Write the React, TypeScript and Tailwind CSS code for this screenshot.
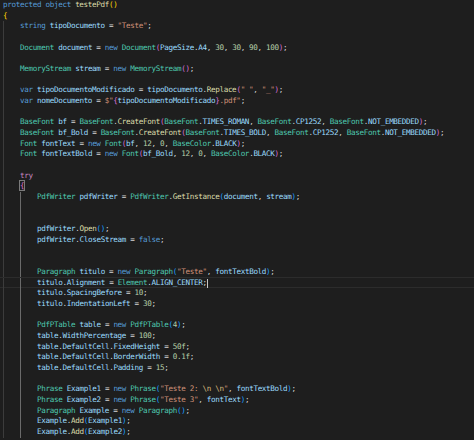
type Kind = 'k' | 't' | 'f' | 'v' | 's' | 'e' | 'n' | 'p' | 'c' | 'b1' | 'b2' | 'b3';
type Tok = [string, Kind];

interface Line {
  indent: number;
  toks: Tok[];
  box?: boolean;
  current?: boolean;
}

const color: Record<Kind, string> = {
  k: 'text-[#569cd6]',
  t: 'text-[#4ec9b0]',
  f: 'text-[#dcdcaa]',
  v: 'text-[#9cdcfe]',
  s: 'text-[#ce9178]',
  e: 'text-[#d7ba7d]',
  n: 'text-[#b5cea8]',
  p: 'text-[#d4d4d4]',
  c: 'text-[#c586c0]',
  b1: 'text-[#ffd700]',
  b2: 'text-[#da70d6]',
  b3: 'text-[#179fff]',
};

const blank = (indent: number): Line => ({ indent, toks: [] });

const lines: Line[] = [
  { indent: 0, toks: [['protected object ', 'k'], ['testePdf', 'f'], ['()', 'b1']] },
  { indent: 0, toks: [['{', 'b1']] },
  { indent: 1, toks: [['string ', 'k'], ['tipoDocumento', 'v'], [' = ', 'p'], ['"Teste"', 's'], [';', 'p']] },
  blank(1),
  {
    indent: 1,
    toks: [
      ['Document ', 't'], ['document', 'v'], [' = ', 'p'], ['new ', 'k'], ['Document', 't'], ['(', 'b2'],
      ['PageSize', 'v'], ['.', 'p'], ['A4', 'v'], [', ', 'p'], ['30', 'n'], [', ', 'p'], ['30', 'n'], [', ', 'p'],
      ['90', 'n'], [', ', 'p'], ['100', 'n'], [')', 'b2'], [';', 'p'],
    ],
  },
  blank(1),
  {
    indent: 1,
    toks: [['MemoryStream ', 't'], ['stream', 'v'], [' = ', 'p'], ['new ', 'k'], ['MemoryStream', 't'], ['()', 'b2'], [';', 'p']],
  },
  blank(1),
  {
    indent: 1,
    toks: [
      ['var ', 'k'], ['tipoDocumentoModificado', 'v'], [' = ', 'p'], ['tipoDocumento', 'v'], ['.', 'p'], ['Replace', 'f'],
      ['(', 'b2'], ['" "', 's'], [', ', 'p'], ['"_"', 's'], [')', 'b2'], [';', 'p'],
    ],
  },
  {
    indent: 1,
    toks: [
      ['var ', 'k'], ['nomeDocumento', 'v'], [' = ', 'p'], ['$"', 's'], ['{', 'b2'], ['tipoDocumentoModificado', 'v'],
      ['}', 'b2'], ['.pdf"', 's'], [';', 'p'],
    ],
  },
  blank(1),
  {
    indent: 1,
    toks: [
      ['BaseFont ', 't'], ['bf', 'v'], [' = ', 'p'], ['BaseFont', 't'], ['.', 'p'], ['CreateFont', 'f'], ['(', 'b2'],
      ['BaseFont', 't'], ['.', 'p'], ['TIMES_ROMAN', 'v'], [', ', 'p'], ['BaseFont', 't'], ['.', 'p'], ['CP1252', 'v'],
      [', ', 'p'], ['BaseFont', 't'], ['.', 'p'], ['NOT_EMBEDDED', 'v'], [')', 'b2'], [';', 'p'],
    ],
  },
  {
    indent: 1,
    toks: [
      ['BaseFont ', 't'], ['bf_Bold', 'v'], [' = ', 'p'], ['BaseFont', 't'], ['.', 'p'], ['CreateFont', 'f'], ['(', 'b2'],
      ['BaseFont', 't'], ['.', 'p'], ['TIMES_BOLD', 'v'], [', ', 'p'], ['BaseFont', 't'], ['.', 'p'], ['CP1252', 'v'],
      [', ', 'p'], ['BaseFont', 't'], ['.', 'p'], ['NOT_EMBEDDED', 'v'], [')', 'b2'], [';', 'p'],
    ],
  },
  {
    indent: 1,
    toks: [
      ['Font ', 't'], ['fontText', 'v'], [' = ', 'p'], ['new ', 'k'], ['Font', 't'], ['(', 'b2'], ['bf', 'v'], [', ', 'p'],
      ['12', 'n'], [', ', 'p'], ['0', 'n'], [', ', 'p'], ['BaseColor', 't'], ['.', 'p'], ['BLACK', 'v'], [')', 'b2'], [';', 'p'],
    ],
  },
  {
    indent: 1,
    toks: [
      ['Font ', 't'], ['fontTextBold', 'v'], [' = ', 'p'], ['new ', 'k'], ['Font', 't'], ['(', 'b2'], ['bf_Bold', 'v'],
      [', ', 'p'], ['12', 'n'], [', ', 'p'], ['0', 'n'], [', ', 'p'], ['BaseColor', 't'], ['.', 'p'], ['BLACK', 'v'],
      [')', 'b2'], [';', 'p'],
    ],
  },
  blank(1),
  { indent: 1, toks: [['try', 'c']] },
  { indent: 1, toks: [['{', 'b2']], box: true },
  {
    indent: 2,
    toks: [
      ['PdfWriter ', 't'], ['pdfWriter', 'v'], [' = ', 'p'], ['PdfWriter', 't'], ['.', 'p'], ['GetInstance', 'f'],
      ['(', 'b3'], ['document', 'v'], [', ', 'p'], ['stream', 'v'], [')', 'b3'], [';', 'p'],
    ],
  },
  blank(2),
  blank(2),
  { indent: 2, toks: [['pdfWriter', 'v'], ['.', 'p'], ['Open', 'f'], ['()', 'b3'], [';', 'p']] },
  { indent: 2, toks: [['pdfWriter', 'v'], ['.', 'p'], ['CloseStream', 'v'], [' = ', 'p'], ['false', 'k'], [';', 'p']] },
  blank(2),
  blank(2),
  {
    indent: 2,
    toks: [
      ['Paragraph ', 't'], ['titulo', 'v'], [' = ', 'p'], ['new ', 'k'], ['Paragraph', 't'], ['(', 'b3'], ['"Teste"', 's'],
      [', ', 'p'], ['fontTextBold', 'v'], [')', 'b3'], [';', 'p'],
    ],
  },
  {
    indent: 2,
    current: true,
    toks: [['titulo', 'v'], ['.', 'p'], ['Alignment', 'v'], [' = ', 'p'], ['Element', 't'], ['.', 'p'], ['ALIGN_CENTER', 'v'], [';', 'p']],
  },
  { indent: 2, toks: [['titulo', 'v'], ['.', 'p'], ['SpacingBefore', 'v'], [' = ', 'p'], ['10', 'n'], [';', 'p']] },
  { indent: 2, toks: [['titulo', 'v'], ['.', 'p'], ['IndentationLeft', 'v'], [' = ', 'p'], ['30', 'n'], [';', 'p']] },
  blank(2),
  {
    indent: 2,
    toks: [
      ['PdfPTable ', 't'], ['table', 'v'], [' = ', 'p'], ['new ', 'k'], ['PdfPTable', 't'], ['(', 'b3'], ['4', 'n'],
      [')', 'b3'], [';', 'p'],
    ],
  },
  { indent: 2, toks: [['table', 'v'], ['.', 'p'], ['WidthPercentage', 'v'], [' = ', 'p'], ['100', 'n'], [';', 'p']] },
  {
    indent: 2,
    toks: [['table', 'v'], ['.', 'p'], ['DefaultCell', 'v'], ['.', 'p'], ['FixedHeight', 'v'], [' = ', 'p'], ['50f', 'n'], [';', 'p']],
  },
  {
    indent: 2,
    toks: [['table', 'v'], ['.', 'p'], ['DefaultCell', 'v'], ['.', 'p'], ['BorderWidth', 'v'], [' = ', 'p'], ['0.1f', 'n'], [';', 'p']],
  },
  {
    indent: 2,
    toks: [['table', 'v'], ['.', 'p'], ['DefaultCell', 'v'], ['.', 'p'], ['Padding', 'v'], [' = ', 'p'], ['15', 'n'], [';', 'p']],
  },
  blank(2),
  {
    indent: 2,
    toks: [
      ['Phrase ', 't'], ['Example1', 'v'], [' = ', 'p'], ['new ', 'k'], ['Phrase', 't'], ['(', 'b3'], ['"Teste 2: ', 's'],
      ['\\n', 'e'], [' ', 's'], ['\\n', 'e'], ['"', 's'], [', ', 'p'], ['fontTextBold', 'v'], [')', 'b3'], [';', 'p'],
    ],
  },
  {
    indent: 2,
    toks: [
      ['Phrase ', 't'], ['Example2', 'v'], [' = ', 'p'], ['new ', 'k'], ['Phrase', 't'], ['(', 'b3'], ['"Teste 3"', 's'],
      [', ', 'p'], ['fontText', 'v'], [')', 'b3'], [';', 'p'],
    ],
  },
  {
    indent: 2,
    toks: [['Paragraph ', 't'], ['Example', 'v'], [' = ', 'p'], ['new ', 'k'], ['Paragraph', 't'], ['()', 'b3'], [';', 'p']],
  },
  { indent: 2, toks: [['Example', 'v'], ['.', 'p'], ['Add', 'f'], ['(', 'b3'], ['Example1', 'v'], [')', 'b3'], [';', 'p']] },
  { indent: 2, toks: [['Example', 'v'], ['.', 'p'], ['Add', 'f'], ['(', 'b3'], ['Example2', 'v'], [')', 'b3'], [';', 'p']] },
];

function CodeLine({ line, index }: { line: Line; index: number }) {
  // the guide for the try block is the active one (cursor sits inside it)
  const guides = Array.from({ length: line.indent }, (_, i) => (
    <span
      key={i}
      className={
        i === 1
          ? 'inline-block w-[17px] h-[10.675px] align-top border-l border-[#6a6a6a]'
          : 'inline-block w-[17px] h-[10.675px] align-top border-l border-[#3c3c3c]'
      }
    />
  ));

  return (
    <div
      className={
        line.current
          ? 'h-[10.675px] leading-[10.675px] whitespace-pre pl-[3px] border-y border-[#2c2c2c]'
          : 'h-[10.675px] leading-[10.675px] whitespace-pre pl-[3px]'
      }
      data-line={index + 1}
    >
      {guides}
      {line.toks.map(([text, kind], i) =>
        line.box ? (
          <span key={i} className={`${color[kind]} outline outline-1 outline-[#7a7a7a]`}>
            {text}
          </span>
        ) : (
          <span key={i} className={color[kind]}>
            {text}
          </span>
        ),
      )}
      {line.current && <span className="inline-block w-px h-[9px] align-middle bg-[#c8c8c8]" />}
    </div>
  );
}

export default function App() {
  return (
    <div className="w-[474px] h-[440px] overflow-hidden bg-[#1e1e1e] font-['DejaVu_Sans_Mono',monospace] text-[7.6px] tracking-[-0.33px]">
      {lines.map((line, i) => (
        <CodeLine key={i} line={line} index={i} />
      ))}
    </div>
  );
}
